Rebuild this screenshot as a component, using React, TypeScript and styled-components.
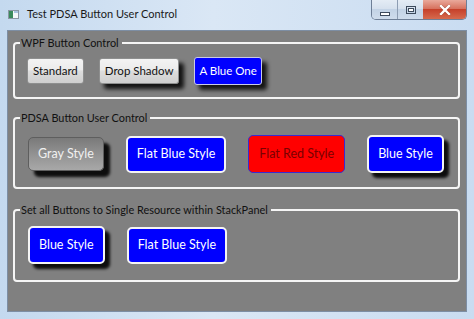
import React from 'react';
import styled, { createGlobalStyle, css } from 'styled-components';

const GlobalStyle = createGlobalStyle`
  html, body {
    margin: 0;
    padding: 0;
    background: #bcd3ec;
  }
  body {
    font-family: Lato, "Open Sans", sans-serif;
  }
`;

type Variant = 'standard' | 'shadow' | 'blueOne' | 'gray' | 'flatBlue' | 'flatRed' | 'blue';

const small = css`
  padding: 0 5px;
  font-size: 11.5px;
  border-radius: 3px;
`;

const large = css`
  padding: 0 9px;
  font-size: 12.5px;
  border-radius: 5px;
`;

const variants = {
  standard: css`
    ${small}
    height: 26px;
    color: #111;
    border: 1px solid #8e8f8f;
    background: linear-gradient(#f3f3f3, #ebebeb 45%, #dddddd 50%, #cfcfcf);
  `,
  shadow: css`
    ${small}
    height: 26px;
    color: #111;
    border: 1px solid #8e8f8f;
    background: linear-gradient(#f3f3f3, #ebebeb 45%, #dddddd 50%, #cfcfcf);
    box-shadow: 5px 5px 4px rgba(0, 0, 0, 0.85);
  `,
  blueOne: css`
    ${small}
    padding: 0 4px;
    height: 28px;
    color: #fff;
    border: 1px solid #c9c9e8;
    background: #0000ff;
    box-shadow: 5px 5px 4px rgba(0, 0, 0, 0.85);
  `,
  gray: css`
    ${large}
    height: 34px;
    color: #f0f0f0;
    border: 1px solid #5e5e5e;
    background: linear-gradient(#7a7a7a, #929292 50%, #a8a8a8);
    box-shadow: 6px 6px 3px rgba(0, 0, 0, 0.9);
  `,
  flatBlue: css`
    ${large}
    height: 37px;
    color: #fff;
    border: 2px solid #f4f4f4;
    background: #0000ff;
  `,
  flatRed: css`
    ${large}
    padding: 0 10px;
    height: 38px;
    color: #7a0000;
    border: 1px solid #3a2ad0;
    background: #ff0000;
  `,
  blue: css`
    ${large}
    height: 38px;
    color: #fff;
    border: 2px solid #f4f4f4;
    background: #0000ff;
    box-shadow: 5px 5px 3px rgba(0, 0, 0, 0.9);
  `,
};

const Button = styled.button<{ $variant: Variant }>`
  box-sizing: border-box;
  font-family: Lato, "Open Sans", sans-serif;
  line-height: 1;
  white-space: nowrap;
  cursor: pointer;
  ${({ $variant }) => variants[$variant]}
`;

const Window = styled.div`
  width: 474px;
  height: 319px;
  display: flex;
  flex-direction: column;
  background: linear-gradient(90deg, #c4d9ef, #dae7f5 45%, #c9dcf1);
  overflow: hidden;
`;

const TitleBar = styled.div`
  height: 30px;
  display: flex;
  align-items: flex-start;
  padding: 0 7px 0 8px;
  flex-shrink: 0;
`;

const TitleText = styled.div`
  margin: 7px 0 0 8px;
  font-size: 11px;
  color: #1a1a1a;
  flex: 1;
`;

const CaptionGroup = styled.div`
  display: flex;
  height: 19px;
  border: 1px solid #6e7f97;
  border-top: none;
  border-radius: 0 0 5px 5px;
  overflow: hidden;
`;

const CaptionButton = styled.div<{ $close?: boolean }>`
  width: ${({ $close }) => ($close ? '43px' : '25px')};
  display: flex;
  align-items: center;
  justify-content: center;
  border-left: ${({ $close }) => ($close ? 'none' : '1px solid #8d9db3')};
  background: ${({ $close }) =>
    $close
      ? 'linear-gradient(#e9a99b, #d7725f 45%, #c6412b 50%, #d66a4e)'
      : 'linear-gradient(#e4ecf5, #d6e1ee 45%, #c3d3e6 50%, #cfdcec)'};
  &:first-child {
    border-left: none;
  }
`;

const Client = styled.div`
  flex: 1;
  margin: 0 7px 7px;
  background: #808080;
  border: 1px solid #7d8ea4;
  display: flex;
  flex-direction: column;
  padding-top: 5px;
`;

const Group = styled.fieldset<{ $mt: number; $pad: string }>`
  margin: ${({ $mt }) => $mt}px 6px 0 5px;
  border: 2px solid #f5f5f5;
  border-radius: 4px;
  padding: ${({ $pad }) => $pad};
  min-width: 0;
`;

const Legend = styled.legend`
  font-size: 10.9px;
  line-height: 14px;
  color: #111;
  padding: 0 3px 0 1px;
  margin-left: -7px;
`;

const Row = styled.div<{ $gap: number; $left?: number }>`
  display: flex;
  align-items: center;
  gap: ${({ $gap }) => $gap}px;
  padding-left: ${({ $left = 0 }) => $left}px;
`;

const AppIcon = () => (
  <svg width="11" height="9" viewBox="0 0 11 9" style={{ marginTop: 10 }}>
    <rect x="0.5" y="0.5" width="10" height="8" fill="#f4f7fa" stroke="#8a96a3" />
    <rect x="1" y="1" width="4" height="7" fill="#3b8a5c" />
    <rect x="6" y="1" width="4" height="2" fill="#a8c4e0" />
  </svg>
);

const MinIcon = () => (
  <svg width="12" height="8" viewBox="0 0 12 8" style={{ marginTop: 6 }}>
    <rect x="1.5" y="3.5" width="9" height="3" fill="#fff" stroke="#3d4a5c" />
  </svg>
);

const MaxIcon = () => (
  <svg width="12" height="10" viewBox="0 0 12 10">
    <rect x="1.5" y="1.5" width="9" height="7" fill="none" stroke="#3d4a5c" />
    <rect x="3.5" y="3.5" width="5" height="3" fill="#fff" stroke="#3d4a5c" />
  </svg>
);

const CloseIcon = () => (
  <svg width="12" height="10" viewBox="0 0 12 10">
    <path d="M2 1 L10 9 M10 1 L2 9" stroke="#5a1a10" strokeWidth="3.4" strokeLinecap="round" opacity="0.35" />
    <path d="M2 1 L10 9 M10 1 L2 9" stroke="#fff" strokeWidth="2.4" strokeLinecap="square" />
  </svg>
);

export default function App() {
  return (
    <>
      <GlobalStyle />
      <Window>
        <TitleBar>
          <AppIcon />
          <TitleText>Test PDSA Button User Control</TitleText>
          <CaptionGroup>
            <CaptionButton>
              <MinIcon />
            </CaptionButton>
            <CaptionButton>
              <MaxIcon />
            </CaptionButton>
            <CaptionButton $close>
              <CloseIcon />
            </CaptionButton>
          </CaptionGroup>
        </TitleBar>
        <Client>
          <Group $mt={0} $pad="7px 12px 12px">
            <Legend>WPF Button Control</Legend>
            <Row $gap={15}>
              <Button $variant="standard">Standard</Button>
              <Button $variant="shadow">Drop Shadow</Button>
              <Button $variant="blueOne">A Blue One</Button>
            </Row>
          </Group>
          <Group $mt={12} $pad="10px 12px 14px">
            <Legend>PDSA Button User Control</Legend>
            <Row $gap={22} $left={1}>
              <Button $variant="gray">Gray Style</Button>
              <Button $variant="flatBlue">Flat Blue Style</Button>
              <Button $variant="flatRed">Flat Red Style</Button>
              <Button $variant="blue">Blue Style</Button>
            </Row>
          </Group>
          <Group $mt={14} $pad="9px 12px 16px">
            <Legend>Set all Buttons to Single Resource within StackPanel</Legend>
            <Row $gap={22} $left={1}>
              <Button $variant="blue">Blue Style</Button>
              <Button $variant="flatBlue">Flat Blue Style</Button>
            </Row>
          </Group>
        </Client>
      </Window>
    </>
  );
}
